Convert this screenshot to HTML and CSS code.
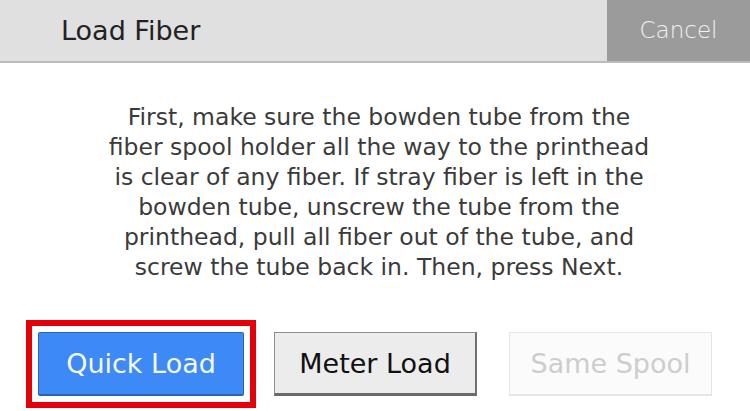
FILE: index.html
```html
<!DOCTYPE html>
<html>
<head>
<meta charset="utf-8">
<link rel="stylesheet" href="styles.css">
</head>
<body>
<div class="header">
  <div class="title">Load Fiber</div>
  <div class="cancel">Cancel</div>
</div>
<p class="message">First, make sure the bowden tube from the<br>fiber spool holder all the way to the printhead<br>is clear of any fiber. If stray fiber is left in the<br>bowden tube, unscrew the tube from the<br>printhead, pull all fiber out of the tube, and<br>screw the tube back in. Then, press Next.</p>
<div class="actions">
  <div class="highlight"><div class="btn btn-primary">Quick Load</div></div>
  <div class="btn btn-default">Meter Load</div>
  <div class="btn btn-disabled">Same Spool</div>
</div>
</body>
</html>
```
FILE: styles.css
```css
html, body {
  margin: 0;
  padding: 0;
  background: #ffffff;
  font-family: "DejaVu Sans", Verdana, sans-serif;
  width: 750px;
  height: 411px;
  overflow: hidden;
}
.header {
  display: flex;
  height: 61px;
  background: #e0e0e0;
  border-bottom: 2px solid #bcbcbc;
}
.title {
  flex: 1;
  padding-left: 61px;
  font-size: 27px;
  line-height: 61px;
  color: #222222;
}
.cancel {
  width: 143px;
  background: #9b9b9b;
  color: #f2f2f2;
  font-size: 23px;
  font-weight: 200;
  line-height: 61px;
  text-align: center;
}
.message {
  margin: 39px 0 0 8px;
  text-align: center;
  font-size: 23.5px;
  line-height: 30px;
  color: #3a3a3a;
}
.actions {
  display: flex;
  align-items: center;
  margin-top: 38px;
  padding-left: 26px;
}
.highlight {
  border: 6px solid #e6000a;
  padding: 6px;
  margin-right: 18px;
}
.btn {
  box-sizing: border-box;
  width: 203px;
  height: 64px;
  font-size: 27px;
  line-height: 62px;
  text-align: center;
}
.btn-primary {
  width: 206px;
  background: #3d89f6;
  color: #f4f8ff;
  border: 1px solid #2c62b4;
  border-bottom-width: 2px;
  border-radius: 2px;
}
.btn-default {
  background: #ececec;
  color: #111111;
  border: 1px solid #8e8e8e;
  border-right: 2px solid #707070;
  border-bottom: 3px solid #6a6a6a;
  margin-right: 32px;
}
.btn-disabled {
  background: #fbfbfb;
  color: #cdcdcd;
  border: 1px solid #e6e6e6;
  border-bottom-width: 2px;
}
```
